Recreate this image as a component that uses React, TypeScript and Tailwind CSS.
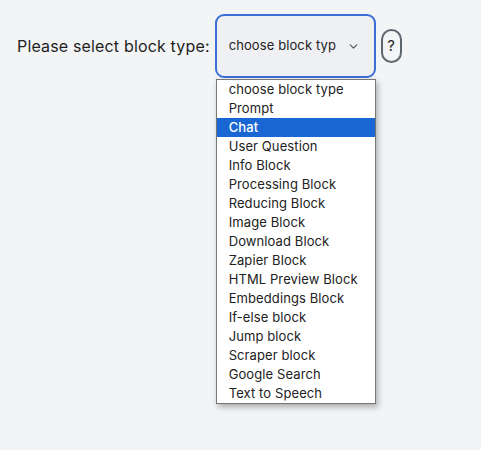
import { ChevronDown } from 'lucide-react';

const options = [
  'choose block type',
  'Prompt',
  'Chat',
  'User Question',
  'Info Block',
  'Processing Block',
  'Reducing Block',
  'Image Block',
  'Download Block',
  'Zapier Block',
  'HTML Preview Block',
  'Embeddings Block',
  'If-else block',
  'Jump block',
  'Scraper block',
  'Google Search',
  'Text to Speech',
];

export default function App() {
  const selected = 'Chat';

  return (
    <div className="min-h-[450px] w-full bg-[#f3f4f6] font-['Inter',sans-serif] text-[#1f1f1f]">
      <div className="flex items-center pl-[17px] pt-[14px]">
        <span className="text-[16px] tracking-[0.16px]">Please select block type:</span>

        <div className="relative ml-[5px]">
          {/* select box */}
          <div className="flex h-[64px] w-[161px] items-center rounded-[9px] border-2 border-[#3b6fd6] bg-[#eff0f3] pl-[12px] pr-[14px]">
            <span className="w-[107px] overflow-hidden whitespace-nowrap text-[13px] tracking-[0.1px] text-[#222]">
              choose block type
            </span>
            <ChevronDown className="ml-auto h-[13px] w-[13px] text-[#555]" strokeWidth={2} />
          </div>

          {/* open dropdown */}
          <ul className="absolute left-[1px] top-[65px] z-10 w-[160px] border border-[#767676] bg-white shadow-[2px_3px_6px_rgba(0,0,0,0.3)]">
            {options.map((opt) => (
              <li
                key={opt}
                className={`h-[19px] pl-[12px] text-[13px] leading-[19px] tracking-[0.1px] whitespace-nowrap ${
                  opt === selected ? 'bg-[#1a66d2] font-medium text-white' : 'text-[#222]'
                }`}
              >
                {opt}
              </li>
            ))}
          </ul>
        </div>

        <button className="ml-[5px] flex h-[34px] w-[21px] items-center justify-center rounded-full border-2 border-[#5f6670] text-[15px] text-[#222]">
          ?
        </button>
      </div>
    </div>
  );
}
